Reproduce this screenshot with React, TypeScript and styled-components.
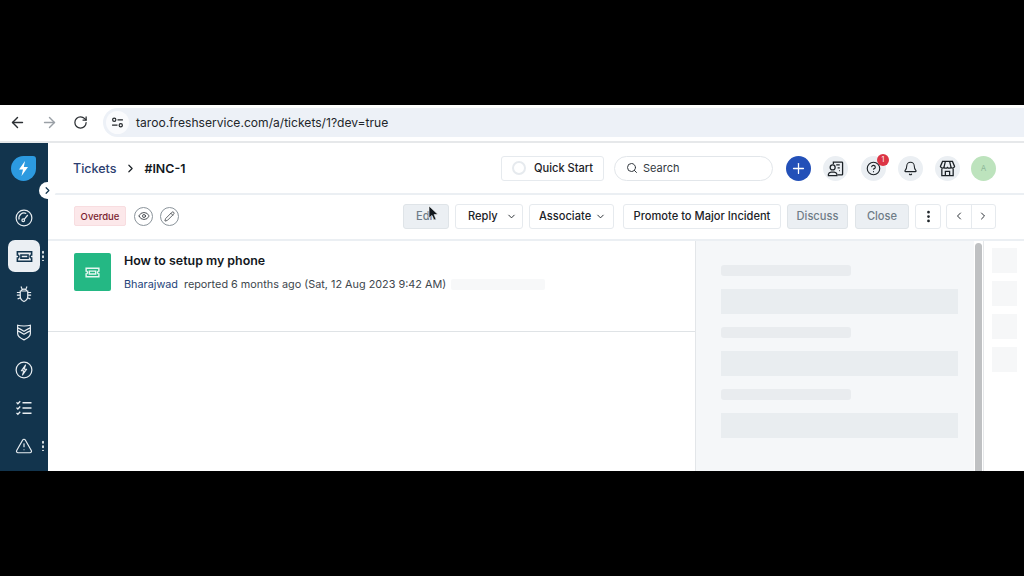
import React from 'react';
import styled, { createGlobalStyle } from 'styled-components';
import {
  ArrowLeft,
  ArrowRight,
  RotateCw,
  ChevronRight,
  ChevronLeft,
  ChevronDown,
  Eye,
  Pencil,
  Search,
  Plus,
  Bell,
  TriangleAlert,
  EllipsisVertical,
  CircleHelp,
} from 'lucide-react';

const GlobalStyle = createGlobalStyle`
  html, body {
    margin: 0;
    padding: 0;
    background: #000;
    overflow: hidden;
    font-family: Inter, "Liberation Sans", sans-serif;
  }
  * { box-sizing: border-box; }
`;

const Page = styled.div`
  position: relative;
  width: 1024px;
  height: 576px;
  display: flex;
  flex-direction: column;
  background: #000;
`;

const Letterbox = styled.div<{ $h: number }>`
  height: ${(p) => p.$h}px;
  flex: none;
`;

const BrowserBar = styled.div`
  height: 38px;
  flex: none;
  background: #fff;
  border-bottom: 2px solid #e6e8ea;
  padding: 3px 0 5px 9px;
  display: flex;
  align-items: center;
  color: #2b2f33;
`;

const NavIcons = styled.div`
  display: flex;
  gap: 15px;
  width: 94px;
  align-items: center;
`;

const UrlPill = styled.div`
  flex: 1;
  height: 29px;
  background: #edf1f7;
  border-radius: 15px 0 0 15px;
  display: flex;
  align-items: center;
  padding-left: 3px;
  font-size: 12.1px;
  color: #22262a;
`;

const UrlTune = styled.span`
  width: 23px;
  height: 23px;
  border-radius: 50%;
  background: #fafbfd;
  display: flex;
  align-items: center;
  justify-content: center;
  margin-right: 7px;
`;

const AppShell = styled.div`
  flex: 1;
  display: flex;
  min-height: 0;
  background: #fff;
`;

const Sidebar = styled.nav`
  width: 48px;
  flex: none;
  background: #12344d;
  display: flex;
  flex-direction: column;
  align-items: center;
  padding-top: 13px;
  color: #e9eef2;
`;

const LogoWrap = styled.div`
  height: 25px;
  margin: 0 1px 21px 0;
`;

const NavItem = styled.div<{ $active?: boolean }>`
  position: relative;
  width: 32px;
  height: 32px;
  margin-bottom: 6px;
  border-radius: 7px;
  display: flex;
  align-items: center;
  justify-content: center;
  background: ${(p) => (p.$active ? '#ebeff3' : 'transparent')};
  color: ${(p) => (p.$active ? '#12344d' : '#e9eef2')};
`;

const NavDots = styled.span`
  position: absolute;
  right: -4px;
  top: 10px;
  width: 2px;
  height: 11px;
  background: radial-gradient(circle, #dfe6ea 1px, transparent 1.2px) 0 0 / 2px 4.5px repeat-y;
`;

const CollapseToggle = styled.div`
  position: absolute;
  left: 39px;
  top: 182px;
  width: 17px;
  height: 17px;
  border-radius: 50%;
  background: #fff;
  color: #12344d;
  display: flex;
  align-items: center;
  justify-content: center;
`;

const Main = styled.div`
  flex: 1;
  min-width: 0;
  display: flex;
  flex-direction: column;
`;

const Header = styled.header`
  height: 52px;
  flex: none;
  border-bottom: 2px solid #ebeff3;
  display: flex;
  align-items: center;
  padding: 0 28px 0 25px;
`;

const Crumb = styled.span`
  font-size: 12.5px;
  font-weight: 500;
  color: #2c3e70;
`;

const CrumbCurrent = styled.span`
  font-size: 12.4px;
  font-weight: 600;
  color: #12181d;
  margin-left: 7px;
`;

const CrumbSep = styled.span`
  display: flex;
  margin-left: 8px;
  color: #1c2227;
`;

const HeaderRight = styled.div`
  margin-left: auto;
  display: flex;
  align-items: center;
`;

const QuickStart = styled.div`
  width: 103px;
  height: 25px;
  border: 1px solid #e6eaee;
  border-radius: 3px;
  display: flex;
  align-items: center;
  padding-left: 10px;
  font-size: 11.1px;
  font-weight: 500;
  color: #1c2227;
`;

const QuickRing = styled.span`
  width: 14px;
  height: 14px;
  border: 2px solid #e6eaee;
  border-radius: 50%;
  margin-right: 8px;
`;

const SearchBox = styled.div`
  width: 159px;
  height: 25px;
  margin-left: 10px;
  margin-right: 13px;
  border: 1px solid #e2e6ea;
  border-radius: 13px;
  display: flex;
  align-items: center;
  padding-left: 11px;
  gap: 5px;
  font-size: 11px;
  color: #33393f;
`;

const Round = styled.div<{ $bg: string; $color: string; $ml?: number }>`
  position: relative;
  width: 25px;
  height: 25px;
  border-radius: 50%;
  flex: none;
  margin-left: ${(p) => p.$ml ?? 12}px;
  background: ${(p) => p.$bg};
  color: ${(p) => p.$color};
  display: flex;
  align-items: center;
  justify-content: center;
  font-size: 8px;
`;

const Badge = styled.span`
  position: absolute;
  top: -2px;
  right: -3px;
  width: 12px;
  height: 12px;
  border-radius: 50%;
  background: #dc3545;
  color: #fff;
  font-size: 7px;
  display: flex;
  align-items: center;
  justify-content: center;
`;

const Toolbar = styled.div`
  height: 46px;
  flex: none;
  border-bottom: 2px solid #ebeff3;
  display: flex;
  align-items: center;
  padding: 0 28px 2px 26px;
`;

const OverdueTag = styled.span`
  width: 52px;
  height: 20px;
  background: #fce8ea;
  border: 1px solid #f8dde0;
  border-radius: 2px;
  color: #7a1c2e;
  font-size: 9.5px;
  font-weight: 500;
  display: flex;
  align-items: center;
  justify-content: center;
  margin-right: 1px;
`;

const OutlineCircle = styled.span`
  width: 19px;
  height: 19px;
  margin-left: 7px;
  border-radius: 50%;
  border: 1px solid #8b949b;
  color: #2b3036;
  display: flex;
  align-items: center;
  justify-content: center;
`;

const ActionRow = styled.div`
  margin-left: auto;
  display: flex;
  align-items: center;
  gap: 6px;
`;

const ActionButton = styled.div<{ $w: number; $disabled?: boolean; $ml?: number }>`
  width: ${(p) => p.$w}px;
  height: 25px;
  margin-left: ${(p) => p.$ml ?? 0}px;
  border-radius: 3px;
  border: 1px solid ${(p) => (p.$disabled ? '#dfe4e8' : '#e6eaee')};
  background: ${(p) => (p.$disabled ? '#ebeff3' : '#fff')};
  color: ${(p) => (p.$disabled ? '#6f7c87' : '#1c2227')};
  font-size: 11.1px;
  font-weight: 500;
  display: flex;
  align-items: center;
  justify-content: center;
`;

const MenuButton = styled(ActionButton)<{ $pl: number; $gap: number }>`
  justify-content: flex-start;
  padding-left: ${(p) => p.$pl}px;
  gap: ${(p) => p.$gap}px;
`;

const Pager = styled.div`
  display: flex;
  width: 50px;
  height: 25px;
  border: 1px solid #e6eaee;
  border-radius: 3px;
  margin-left: -1px;
`;

const PagerCell = styled.span<{ $divider?: boolean }>`
  flex: 1;
  display: flex;
  align-items: center;
  justify-content: center;
  color: #2b3036;
  border-left: ${(p) => (p.$divider ? '1px solid #e6eaee' : 'none')};
`;

const Body = styled.div`
  flex: 1;
  min-height: 0;
  display: flex;
`;

const TicketColumn = styled.section`
  width: 647px;
  flex: none;
`;

const TicketHead = styled.div`
  height: 91px;
  border-bottom: 1px solid #dfe3e6;
  padding: 12px 0 0 26px;
  display: flex;
  gap: 13px;
`;

const TicketBadge = styled.div`
  width: 37px;
  height: 38px;
  background: #24b884;
  border-radius: 2px;
  color: #e6f7f1;
  display: flex;
  align-items: center;
  justify-content: center;
`;

const TicketTitle = styled.h1`
  margin: 0;
  font-size: 12.4px;
  line-height: 16px;
  font-weight: 600;
  color: #12181d;
`;

const TicketMeta = styled.div`
  margin-top: 7px;
  display: flex;
  align-items: center;
  font-size: 10.85px;
  line-height: 16px;
  color: #3d464d;
`;

const Author = styled.span`
  color: #24437a;
  margin-right: 6px;
`;

const MetaSkeleton = styled.span`
  width: 94px;
  height: 11px;
  margin-left: 5px;
  background: #f7f8f9;
  border-radius: 2px;
`;

const SidePanel = styled.aside`
  width: 279px;
  flex: none;
  background: #f5f7f9;
  border-left: 1px solid #e3e6e9;
  padding: 24px 16px 0 25px;
`;

const SkeletonLabel = styled.div`
  width: 130px;
  height: 11px;
  border-radius: 3px;
  background: #e9ecef;
  filter: blur(0.6px);
  margin-bottom: 13px;
`;

const SkeletonField = styled.div`
  height: 25px;
  background: #e9edf0;
  filter: blur(0.6px);
  margin-bottom: 13px;
`;

const ScrollBar = styled.div`
  width: 9px;
  flex: none;
  background: #fff;
  padding: 2px 1px 0;
`;

const ScrollThumb = styled.div`
  height: 100%;
  background: #bfc1c3;
  border-radius: 4px 4px 0 0;
`;

const Rail = styled.div`
  flex: 1;
  border-left: 1px solid #e6e8ea;
  padding: 7px 0 0 8px;
  display: flex;
  flex-direction: column;
  gap: 8px;
`;

const RailSquare = styled.div`
  width: 25px;
  height: 25px;
  background: #f6f7f8;
  filter: blur(0.6px);
`;

const Cursor = styled.svg`
  position: absolute;
  left: 428px;
  top: 206px;
`;

function TicketIcon({ size = 16 }: { size?: number }) {
  return (
    <svg width={size} height={size} viewBox="0 0 24 24" fill="none" stroke="currentColor" strokeWidth="2">
      <path d="M3 6h18v4a2 2 0 0 0 0 4v4H3v-4a2 2 0 0 0 0-4z" />
      <path d="M7.5 10h9v4h-9z" />
    </svg>
  );
}

function GaugeIcon() {
  return (
    <svg width="18" height="18" viewBox="0 0 24 24" fill="none" stroke="currentColor" strokeWidth="1.6">
      <circle cx="12" cy="12" r="10.5" />
      <path d="M5.5 14a6.8 6.8 0 0 1 9.5-8" />
      <circle cx="11" cy="15" r="1.8" />
      <path d="M12.3 13.7L17 8" />
    </svg>
  );
}

function BugIcon() {
  return (
    <svg width="18" height="18" viewBox="0 0 24 24" fill="none" stroke="currentColor" strokeWidth="1.6">
      <path d="M8 2l1.5 3.5M16 2l-1.5 3.5" />
      <path d="M8.5 8c0-3.5 7-3.5 7 0" />
      <path d="M7 8h10v7c0 3.5-2.5 6-5 7-2.5-1-5-3.5-5-7z" />
      <path d="M7 10H2.5M17 10h4.5M7 13.5H2.5M17 13.5h4.5M7.5 17l-4 1.5M16.5 17l4 1.5" />
    </svg>
  );
}

function ShieldIcon() {
  return (
    <svg width="18" height="18" viewBox="0 0 24 24" fill="none" stroke="currentColor" strokeWidth="1.6">
      <path d="M3.5 3c4 1.3 13 1.3 17 0v11c0 3.5-4 6.5-8.5 8.5-4.5-2-8.5-5-8.5-8.5z" />
      <path d="M3.5 6.5c3.5 1 6 3 8.5 4.5 2.5-1.5 5-3.5 8.5-4.5M3.5 10.5c3 1 6 3 8.5 4.5 2.5-1.5 5.500-3.5 8.5-4.5" />
    </svg>
  );
}

function BoltCircleIcon() {
  return (
    <svg width="18" height="18" viewBox="0 0 24 24" fill="none" stroke="currentColor" strokeWidth="1.6">
      <circle cx="12" cy="12" r="10.5" />
      <path d="M14 5.5l-5.5 7.5h3.5l-2 5.5 5.5-7.5h-3.5z" strokeLinejoin="round" />
    </svg>
  );
}

function CheckRowsIcon() {
  return (
    <svg width="18" height="18" viewBox="0 0 24 24" fill="none" stroke="currentColor" strokeWidth="1.8">
      <path d="M10 5h12M10 12h12M10 19h12" />
      <path d="M2 4.5l1.8 1.8L7 3M2 11.5l1.8 1.8L7 10M2 18.5l1.8 1.8L7 17" />
    </svg>
  );
}

function AgentListIcon() {
  return (
    <svg width="17" height="17" viewBox="0 0 24 24" fill="none" stroke="currentColor" strokeWidth="1.8">
      <path d="M9 6V3h12a1 1 0 0 1 1 1v16a1 1 0 0 1-1 1h-6" />
      <path d="M13 7h5M15 11h3M17 15h1" />
      <circle cx="8" cy="10.5" r="3.5" />
      <path d="M2 22v-2a4 4 0 0 1 4-3h4a4 4 0 0 1 4 3v2z" />
    </svg>
  );
}

function ShopIcon() {
  return (
    <svg width="17" height="17" viewBox="0 0 24 24" fill="none" stroke="currentColor" strokeWidth="1.8">
      <path d="M5 2h14l3 7a3 3 0 0 1-5 1.5 3.5 3.5 0 0 1-5 0 3.5 3.5 0 0 1-5 0A3 3 0 0 1 2 9z" />
      <path d="M9 2L7 10.5M15 2l2 8.5" />
      <path d="M4 12v10h16V12" />
      <path d="M9 22v-6h6v6" />
    </svg>
  );
}

function TuneIcon() {
  return (
    <svg width="13" height="13" viewBox="0 0 24 24" fill="none" stroke="#22262a" strokeWidth="2.2">
      <circle cx="6" cy="7" r="3" />
      <path d="M12 7h10M2 17h10" />
      <circle cx="18" cy="17" r="3" />
    </svg>
  );
}

function Logo() {
  return (
    <svg width="25" height="25" viewBox="0 0 25 25">
      <path d="M12.5 0H22a3 3 0 0 1 3 3v9.5A12.5 12.5 0 1 1 12.5 0z" fill="#2c9ae0" />
      <path d="M14 5l-6 8.5h4l-1.5 6.5 6.5-9h-4.2z" fill="#fff" />
    </svg>
  );
}

const actions = [
  { label: 'Reply', w: 68, pl: 12, gap: 8 },
  { label: 'Associate', w: 85, pl: 9, gap: 4 },
];

export default function App(): JSX.Element {
  return (
    <Page>
      <GlobalStyle />
      <Letterbox $h={105} />
      <BrowserBar>
        <NavIcons>
          <ArrowLeft size={17} strokeWidth={2} />
          <ArrowRight size={17} strokeWidth={2} color="#9aa0a6" />
          <RotateCw size={15} strokeWidth={2} />
        </NavIcons>
        <UrlPill>
          <UrlTune>
            <TuneIcon />
          </UrlTune>
          taroo.freshservice.com/a/tickets/1?dev=true
        </UrlPill>
      </BrowserBar>
      <AppShell>
        <Sidebar>
          <LogoWrap>
            <Logo />
          </LogoWrap>
          <NavItem>
            <GaugeIcon />
          </NavItem>
          <NavItem $active>
            <TicketIcon size={19} />
            <NavDots />
          </NavItem>
          <NavItem>
            <BugIcon />
          </NavItem>
          <NavItem>
            <ShieldIcon />
          </NavItem>
          <NavItem>
            <BoltCircleIcon />
          </NavItem>
          <NavItem>
            <CheckRowsIcon />
          </NavItem>
          <NavItem>
            <TriangleAlert size={18} strokeWidth={1.6} />
            <NavDots />
          </NavItem>
        </Sidebar>
        <Main>
          <Header>
            <Crumb>Tickets</Crumb>
            <CrumbSep>
              <ChevronRight size={13} strokeWidth={2.2} />
            </CrumbSep>
            <CrumbCurrent>#INC-1</CrumbCurrent>
            <HeaderRight>
              <QuickStart>
                <QuickRing />
                Quick Start
              </QuickStart>
              <SearchBox>
                <Search size={12} strokeWidth={2} />
                Search
              </SearchBox>
              <Round $bg="#2350b8" $color="#fff" $ml={0}>
                <Plus size={17} strokeWidth={1.8} />
              </Round>
              <Round $bg="#ebeff3" $color="#1c2227">
                <AgentListIcon />
              </Round>
              <Round $bg="#ebeff3" $color="#1c2227" $ml={13}>
                <CircleHelp size={15} strokeWidth={1.8} />
                <Badge>1</Badge>
              </Round>
              <Round $bg="#ebeff3" $color="#1c2227">
                <Bell size={15} strokeWidth={1.7} />
              </Round>
              <Round $bg="#ebeff3" $color="#1c2227">
                <ShopIcon />
              </Round>
              <Round $bg="#bde3bd" $color="#8fb89a" $ml={11}>
                A
              </Round>
            </HeaderRight>
          </Header>
          <Toolbar>
            <OverdueTag>Overdue</OverdueTag>
            <OutlineCircle>
              <Eye size={12} strokeWidth={1.6} />
            </OutlineCircle>
            <OutlineCircle>
              <Pencil size={11} strokeWidth={1.6} />
            </OutlineCircle>
            <ActionRow>
              <ActionButton $w={46} $disabled>
                Edit
              </ActionButton>
              {actions.map((a) => (
                <MenuButton key={a.label} $w={a.w} $pl={a.pl} $gap={a.gap}>
                  {a.label}
                  <ChevronDown size={11} strokeWidth={2} />
                </MenuButton>
              ))}
              <ActionButton $w={158} $ml={3}>
                Promote to Major Incident
              </ActionButton>
              <ActionButton $w={61} $disabled>
                Discuss
              </ActionButton>
              <ActionButton $w={54} $disabled $ml={1}>
                Close
              </ActionButton>
              <ActionButton $w={26}>
                <EllipsisVertical size={15} strokeWidth={2.4} />
              </ActionButton>
              <Pager>
                <PagerCell>
                  <ChevronLeft size={12} strokeWidth={2} />
                </PagerCell>
                <PagerCell $divider>
                  <ChevronRight size={12} strokeWidth={2} />
                </PagerCell>
              </Pager>
            </ActionRow>
          </Toolbar>
          <Body>
            <TicketColumn>
              <TicketHead>
                <TicketBadge>
                  <TicketIcon size={17} />
                </TicketBadge>
                <div>
                  <TicketTitle>How to setup my phone</TicketTitle>
                  <TicketMeta>
                    <Author>Bharajwad</Author>
                    reported 6 months ago (Sat, 12 Aug 2023 9:42 AM)
                    <MetaSkeleton />
                  </TicketMeta>
                </div>
              </TicketHead>
            </TicketColumn>
            <SidePanel>
              <SkeletonLabel />
              <SkeletonField />
              <SkeletonLabel />
              <SkeletonField />
              <SkeletonLabel />
              <SkeletonField />
            </SidePanel>
            <ScrollBar>
              <ScrollThumb />
            </ScrollBar>
            <Rail>
              <RailSquare />
              <RailSquare />
              <RailSquare />
              <RailSquare />
            </Rail>
          </Body>
        </Main>
      </AppShell>
      <Letterbox $h={105} />
      <CollapseToggle>
        <ChevronRight size={11} strokeWidth={2.6} />
      </CollapseToggle>
      <Cursor width="10" height="15" viewBox="0 0 10 15">
        <path d="M1 0v12l3-2.6L6 14l2-1-2-4.4h4z" fill="#12181d" stroke="#fff" strokeWidth="0.6" />
      </Cursor>
    </Page>
  );
}
